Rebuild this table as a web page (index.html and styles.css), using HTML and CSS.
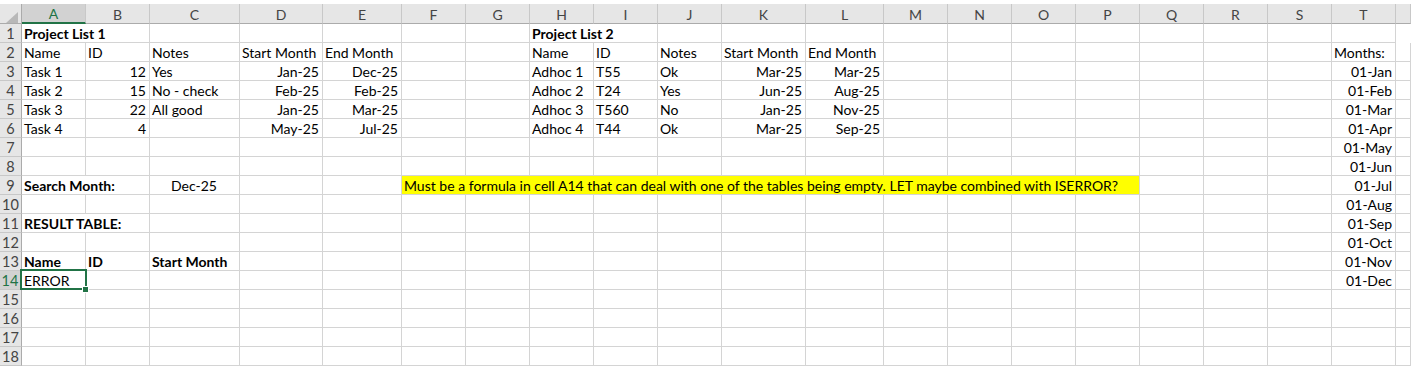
FILE: index.html
```html
<!DOCTYPE html>
<html>
<head>
<meta charset="utf-8">
<link rel="stylesheet" href="styles.css">
</head>
<body>
<div class="sheet">
  <div class="topstrip"></div>
  <div class="row hdr">
    <div class="corner"><svg width="22" height="20" viewBox="0 0 22 20"><polygon points="6,19 18,19 18,8" fill="#b8b8b8"/></svg></div>
    <div class="ch sel">A</div><div class="ch">B</div><div class="ch">C</div><div class="ch">D</div><div class="ch">E</div><div class="ch">F</div><div class="ch">G</div><div class="ch">H</div><div class="ch">I</div><div class="ch">J</div><div class="ch">K</div><div class="ch">L</div><div class="ch">M</div><div class="ch">N</div><div class="ch">O</div><div class="ch">P</div><div class="ch">Q</div><div class="ch">R</div><div class="ch">S</div><div class="ch">T</div><div class="ch"></div>
  </div>

  <div class="row">
    <div class="rh">1</div>
    <div class="c b s2">Project List 1</div><div class="c"></div><div class="c"></div><div class="c"></div><div class="c"></div><div class="c"></div>
    <div class="c b s2">Project List 2</div><div class="c"></div><div class="c"></div><div class="c"></div><div class="c"></div><div class="c"></div><div class="c"></div><div class="c"></div><div class="c"></div><div class="c"></div><div class="c"></div><div class="c"></div>
  </div>

  <div class="row">
    <div class="rh">2</div>
    <div class="c">Name</div><div class="c">ID</div><div class="c">Notes</div><div class="c">Start Month</div><div class="c">End Month</div><div class="c"></div><div class="c"></div>
    <div class="c">Name</div><div class="c">ID</div><div class="c">Notes</div><div class="c">Start Month</div><div class="c">End Month</div><div class="c"></div><div class="c"></div><div class="c"></div><div class="c"></div><div class="c"></div><div class="c"></div><div class="c"></div><div class="c">Months:</div><div class="c"></div>
  </div>

  <div class="row">
    <div class="rh">3</div>
    <div class="c">Task 1</div><div class="c r">12</div><div class="c">Yes</div><div class="c r">Jan-25</div><div class="c r">Dec-25</div><div class="c"></div><div class="c"></div>
    <div class="c">Adhoc 1</div><div class="c">T55</div><div class="c">Ok</div><div class="c r">Mar-25</div><div class="c r">Mar-25</div><div class="c"></div><div class="c"></div><div class="c"></div><div class="c"></div><div class="c"></div><div class="c"></div><div class="c"></div><div class="c r">01-Jan</div><div class="c"></div>
  </div>

  <div class="row">
    <div class="rh">4</div>
    <div class="c">Task 2</div><div class="c r">15</div><div class="c">No - check</div><div class="c r">Feb-25</div><div class="c r">Feb-25</div><div class="c"></div><div class="c"></div>
    <div class="c">Adhoc 2</div><div class="c">T24</div><div class="c">Yes</div><div class="c r">Jun-25</div><div class="c r">Aug-25</div><div class="c"></div><div class="c"></div><div class="c"></div><div class="c"></div><div class="c"></div><div class="c"></div><div class="c"></div><div class="c r">01-Feb</div><div class="c"></div>
  </div>

  <div class="row">
    <div class="rh">5</div>
    <div class="c">Task 3</div><div class="c r">22</div><div class="c">All good</div><div class="c r">Jan-25</div><div class="c r">Mar-25</div><div class="c"></div><div class="c"></div>
    <div class="c">Adhoc 3</div><div class="c">T560</div><div class="c">No</div><div class="c r">Jan-25</div><div class="c r">Nov-25</div><div class="c"></div><div class="c"></div><div class="c"></div><div class="c"></div><div class="c"></div><div class="c"></div><div class="c"></div><div class="c r">01-Mar</div><div class="c"></div>
  </div>

  <div class="row">
    <div class="rh">6</div>
    <div class="c">Task 4</div><div class="c r">4</div><div class="c"></div><div class="c r">May-25</div><div class="c r">Jul-25</div><div class="c"></div><div class="c"></div>
    <div class="c">Adhoc 4</div><div class="c">T44</div><div class="c">Ok</div><div class="c r">Mar-25</div><div class="c r">Sep-25</div><div class="c"></div><div class="c"></div><div class="c"></div><div class="c"></div><div class="c"></div><div class="c"></div><div class="c"></div><div class="c r">01-Apr</div><div class="c"></div>
  </div>

  <div class="row">
    <div class="rh">7</div>
    <div class="c"></div><div class="c"></div><div class="c"></div><div class="c"></div><div class="c"></div><div class="c"></div><div class="c"></div><div class="c"></div><div class="c"></div><div class="c"></div><div class="c"></div><div class="c"></div><div class="c"></div><div class="c"></div><div class="c"></div><div class="c"></div><div class="c"></div><div class="c"></div><div class="c"></div><div class="c r">01-May</div><div class="c"></div>
  </div>

  <div class="row">
    <div class="rh">8</div>
    <div class="c"></div><div class="c"></div><div class="c"></div><div class="c"></div><div class="c"></div><div class="c"></div><div class="c"></div><div class="c"></div><div class="c"></div><div class="c"></div><div class="c"></div><div class="c"></div><div class="c"></div><div class="c"></div><div class="c"></div><div class="c"></div><div class="c"></div><div class="c"></div><div class="c"></div><div class="c r">01-Jun</div><div class="c"></div>
  </div>

  <div class="row">
    <div class="rh">9</div>
    <div class="c b s2">Search Month:</div><div class="c ctr">Dec-25</div><div class="c"></div><div class="c"></div>
    <div class="c note s11">Must be a formula in cell A14 that can deal with one of the tables being empty. LET maybe combined with ISERROR?</div>
    <div class="c"></div><div class="c"></div><div class="c"></div><div class="c r">01-Jul</div><div class="c"></div>
  </div>

  <div class="row">
    <div class="rh">10</div>
    <div class="c"></div><div class="c"></div><div class="c"></div><div class="c"></div><div class="c"></div><div class="c"></div><div class="c"></div><div class="c"></div><div class="c"></div><div class="c"></div><div class="c"></div><div class="c"></div><div class="c"></div><div class="c"></div><div class="c"></div><div class="c"></div><div class="c"></div><div class="c"></div><div class="c"></div><div class="c r">01-Aug</div><div class="c"></div>
  </div>

  <div class="row">
    <div class="rh">11</div>
    <div class="c b s2">RESULT TABLE:</div><div class="c"></div><div class="c"></div><div class="c"></div><div class="c"></div><div class="c"></div><div class="c"></div><div class="c"></div><div class="c"></div><div class="c"></div><div class="c"></div><div class="c"></div><div class="c"></div><div class="c"></div><div class="c"></div><div class="c"></div><div class="c"></div><div class="c"></div><div class="c r">01-Sep</div><div class="c"></div>
  </div>

  <div class="row">
    <div class="rh">12</div>
    <div class="c"></div><div class="c"></div><div class="c"></div><div class="c"></div><div class="c"></div><div class="c"></div><div class="c"></div><div class="c"></div><div class="c"></div><div class="c"></div><div class="c"></div><div class="c"></div><div class="c"></div><div class="c"></div><div class="c"></div><div class="c"></div><div class="c"></div><div class="c"></div><div class="c"></div><div class="c r">01-Oct</div><div class="c"></div>
  </div>

  <div class="row">
    <div class="rh">13</div>
    <div class="c b">Name</div><div class="c b">ID</div><div class="c b">Start Month</div><div class="c"></div><div class="c"></div><div class="c"></div><div class="c"></div><div class="c"></div><div class="c"></div><div class="c"></div><div class="c"></div><div class="c"></div><div class="c"></div><div class="c"></div><div class="c"></div><div class="c"></div><div class="c"></div><div class="c"></div><div class="c"></div><div class="c r">01-Nov</div><div class="c"></div>
  </div>

  <div class="row">
    <div class="rh rsel">14</div>
    <div class="c active">ERROR<span class="selbox"></span><span class="handle"></span></div><div class="c"></div><div class="c"></div><div class="c"></div><div class="c"></div><div class="c"></div><div class="c"></div><div class="c"></div><div class="c"></div><div class="c"></div><div class="c"></div><div class="c"></div><div class="c"></div><div class="c"></div><div class="c"></div><div class="c"></div><div class="c"></div><div class="c"></div><div class="c"></div><div class="c r">01-Dec</div><div class="c"></div>
  </div>

  <div class="row">
    <div class="rh">15</div>
    <div class="c"></div><div class="c"></div><div class="c"></div><div class="c"></div><div class="c"></div><div class="c"></div><div class="c"></div><div class="c"></div><div class="c"></div><div class="c"></div><div class="c"></div><div class="c"></div><div class="c"></div><div class="c"></div><div class="c"></div><div class="c"></div><div class="c"></div><div class="c"></div><div class="c"></div><div class="c"></div><div class="c"></div>
  </div>

  <div class="row">
    <div class="rh">16</div>
    <div class="c"></div><div class="c"></div><div class="c"></div><div class="c"></div><div class="c"></div><div class="c"></div><div class="c"></div><div class="c"></div><div class="c"></div><div class="c"></div><div class="c"></div><div class="c"></div><div class="c"></div><div class="c"></div><div class="c"></div><div class="c"></div><div class="c"></div><div class="c"></div><div class="c"></div><div class="c"></div><div class="c"></div>
  </div>

  <div class="row">
    <div class="rh">17</div>
    <div class="c"></div><div class="c"></div><div class="c"></div><div class="c"></div><div class="c"></div><div class="c"></div><div class="c"></div><div class="c"></div><div class="c"></div><div class="c"></div><div class="c"></div><div class="c"></div><div class="c"></div><div class="c"></div><div class="c"></div><div class="c"></div><div class="c"></div><div class="c"></div><div class="c"></div><div class="c"></div><div class="c"></div>
  </div>

  <div class="row">
    <div class="rh">18</div>
    <div class="c"></div><div class="c"></div><div class="c"></div><div class="c"></div><div class="c"></div><div class="c"></div><div class="c"></div><div class="c"></div><div class="c"></div><div class="c"></div><div class="c"></div><div class="c"></div><div class="c"></div><div class="c"></div><div class="c"></div><div class="c"></div><div class="c"></div><div class="c"></div><div class="c"></div><div class="c"></div><div class="c"></div>
  </div>
</div>
</body>
</html>
```
FILE: styles.css
```css
* { box-sizing: border-box; }
html, body { margin: 0; padding: 0; background: #fff; }
body { width: 1411px; height: 367px; overflow: hidden; }

.sheet {
  font-family: "Lato", "Liberation Sans", sans-serif;
  font-size: 14px;
  color: #000;
}

.topstrip { height: 4px; background: #fff; }

.row {
  display: grid;
  grid-template-columns: 22px 64px 64px 90px 83px 79px 64px 64px 64px 64px 64px 84px 78px 64px 64px 64px 64px 64px 64px 64px 64px 15px;
  height: 19px;
}
.row.hdr { height: 20px; }

.corner {
  background: #e6e6e6;
  border-right: 1px solid #ababab;
  border-bottom: 1px solid #ababab;
  overflow: hidden;
}
.corner svg { display: block; }

.ch {
  background: #e6e6e6;
  color: #444;
  border-right: 1px solid #c8c8c8;
  border-bottom: 1px solid #ababab;
  display: flex;
  align-items: center;
  justify-content: center;
  font-size: 14px;
  padding-top: 1px;
}
.ch.sel {
  background: #d2d2d2;
  color: #217346;
  border-bottom: 2px solid #217346;
}

.rh {
  background: #e6e6e6;
  color: #444;
  border-right: 1px solid #ababab;
  border-bottom: 1px solid #c8c8c8;
  display: flex;
  align-items: flex-end;
  justify-content: center;
  font-size: 14.5px;
  line-height: 17px;
  padding-bottom: 0;
}
.rh.rsel {
  background: #d2d2d2;
  color: #217346;
  border-right: 2px solid #217346;
}

.c {
  border-right: 1px solid #d4d4d4;
  border-bottom: 1px solid #d4d4d4;
  white-space: nowrap;
  padding: 0 3px 0 2px;
  line-height: 17px;
  display: flex;
  align-items: flex-end;
  position: relative;
}
.c.r { justify-content: flex-end; }
.c.ctr { justify-content: center; }
.c.b { font-weight: 700; }
.c.s2 { grid-column: span 2; }
.c.s11 { grid-column: span 11; }
.c.note { background: #ffff00; padding-left: 2px; }
.c.active { z-index: 2; }

.selbox {
  position: absolute;
  left: -2px;
  right: -2px;
  top: -2px;
  bottom: -1px;
  border: 2px solid #217346;
  pointer-events: none;
}
.handle {
  position: absolute;
  right: -4px;
  bottom: -4px;
  width: 7px;
  height: 7px;
  background: #217346;
  border: 1px solid #fff;
}
```
